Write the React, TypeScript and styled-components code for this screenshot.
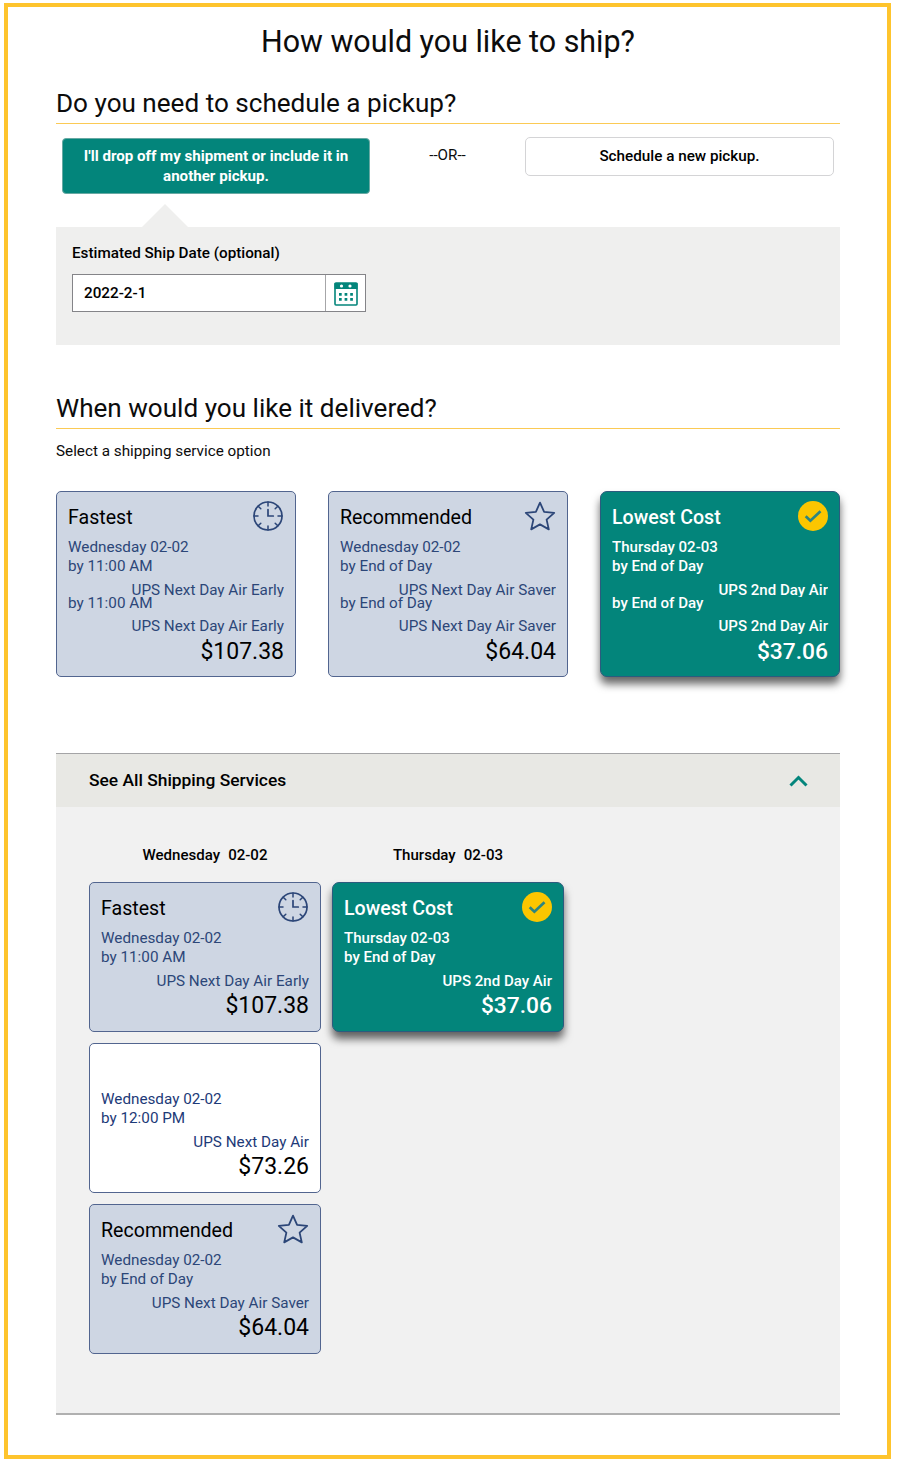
import React from "react";
import styled, { createGlobalStyle, css } from "styled-components";

const teal = "#03857b";
const gold = "#fec42d";
const navy = "#2c4678";

const GlobalStyle = createGlobalStyle`
  * { box-sizing: border-box; }
  body {
    margin: 0;
    background: #fff;
    color: #0c0c0c;
    font-family: Roboto, "Liberation Sans", sans-serif;
    font-size: 15.25px;
    line-height: 19.5px;
  }
  h1, h2, h3 { margin: 0; font-weight: 400; }
  p { margin: 0; }
  button { font: inherit; color: inherit; }
`;

const Frame = styled.main`
  width: 887px;
  height: 1456px;
  margin: 3px 0 10px 4px;
  border: 4px solid ${gold};
  padding: 15px 47px 0 48px;
`;

const PageTitle = styled.h1`
  font-size: 30.45px;
  line-height: 40px;
  text-align: center;
`;

const SectionTitle = styled.h2`
  font-size: 26.1px;
  line-height: 40px;
  height: 41px;
  border-bottom: 1px solid #fbca55;
`;

const PickupSection = styled.section`
  margin-top: 21px;
`;

const PickupChoices = styled.div`
  display: flex;
  align-items: flex-start;
  justify-content: space-between;
  padding: 13px 6px 0 6px;
  height: 80px;
`;

const ChoiceButton = styled.button<{ $selected?: boolean }>`
  width: 309px;
  padding: 9px 14px 8px;
  border: 1px solid #d4d4d6;
  border-radius: 5px;
  background: #fff;
  color: #000;
  font-weight: 500;
  line-height: 19.5px;
  ${(p) =>
    p.$selected &&
    css`
      width: 308px;
      margin-top: 1px;
      padding: 8px 14px 7px;
      border-color: #68a9a3;
      border-radius: 4px;
      background: ${teal};
      color: #fff;
      font-weight: 700;
      font-size: 15.12px;
    `}
`;

const OrLabel = styled.span`
  padding-top: 9px;
  font-size: 15.2px;
`;

const Pointer = styled.svg`
  display: block;
  margin: 0 0 0 86px;
  width: 46px;
  height: 23px;
`;

const DatePanel = styled.div`
  height: 118px;
  padding: 17px 16px 16px;
  background: #efefee;
`;

const DateLabel = styled.label`
  display: block;
  font-weight: 500;
  color: #000;
`;

const DateField = styled.div`
  display: flex;
  width: 294px;
  height: 38px;
  margin-top: 10px;
  border: 1px solid #848488;
  background: #fff;
`;

const DateValue = styled.div`
  flex: 1;
  padding: 9px 11px 0;
  font-weight: 500;
  color: #000;
`;

const CalendarButton = styled.button`
  display: flex;
  align-items: center;
  justify-content: center;
  width: 40px;
  padding: 2px 0 0;
  border: 0;
  border-left: 1px solid #a6a6a8;
  background: #fff;
`;

const DeliverySection = styled.section`
  margin-top: 43px;
`;

const Hint = styled.p`
  margin-top: 13px;
`;

const FeaturedCards = styled.div`
  display: grid;
  grid-template-columns: repeat(3, 240px);
  justify-content: space-between;
  margin-top: 29px;
`;

type Tone = "shaded" | "plain" | "selected";

const Card = styled.article<{ $tone: Tone; $tall?: boolean }>`
  height: ${(p) => (p.$tall ? 186 : 150)}px;
  padding: 0 11px;
  border: 1px solid #52658f;
  border-radius: 5px;
  background: ${(p) => ({ shaded: "#ced6e3", plain: "#fff", selected: teal })[p.$tone]};
  color: ${(p) => (p.$tone === "selected" ? "#fff" : p.$tone === "plain" ? "#1d3a78" : navy)};
  ${(p) =>
    p.$tone === "selected" &&
    css`
      border-color: #2c5b7e;
      border-radius: 7px;
      box-shadow: 0 7px 9px rgba(0, 0, 0, 0.6);
      font-weight: 500;
      font-size: 15.05px;
    `}
`;

const CardHeader = styled.header<{ $selected: boolean }>`
  display: flex;
  justify-content: space-between;
  height: 46px;
  color: ${(p) => (p.$selected ? "#fff" : "#000")};
`;

const CardTitle = styled.h3<{ $selected: boolean }>`
  padding-top: 12px;
  font-size: 19.6px;
  line-height: 27px;
  font-weight: ${(p) => (p.$selected ? 500 : 400)};
`;

const CardIcon = styled.svg<{ $flush?: boolean }>`
  flex: none;
  width: 32px;
  height: 32px;
  margin: 8px ${(p) => (p.$flush ? -1 : 0)}px 0 0;
`;

const Arrival = styled.p``;

const ServiceName = styled.p`
  margin-top: 4px;
  text-align: right;
`;

const ClippedDetails = styled.div`
  height: 59px;
  overflow: hidden;
`;

const RepeatedDetails = styled.div`
  margin-top: -3px;
`;

const Price = styled.p<{ $selected: boolean }>`
  margin-top: 1px;
  font-size: ${(p) => (p.$selected ? 22.8 : 23)}px;
  line-height: 27px;
  text-align: right;
  color: ${(p) => (p.$selected ? "#fff" : "#000")};
`;

const ServicesSection = styled.section`
  height: 662px;
  margin-top: 76px;
  border-top: 1.5px solid #a4a4a6;
  border-bottom: 2px solid #b0b0b0;
  background: #f1f1f1;
`;

const ServicesHeader = styled.header`
  display: flex;
  align-items: center;
  justify-content: space-between;
  height: 53px;
  padding: 1px 32px 0 33px;
  background: #e8e8e4;
  color: #000;
  font-size: 17.4px;
  font-weight: 500;
`;

const Chevron = styled.svg`
  width: 19px;
  height: 12px;
`;

const DayColumns = styled.div`
  display: grid;
  grid-template-columns: 232px 232px;
  align-items: start;
  gap: 11px;
  padding: 39px 33px 0;
`;

const DayColumn = styled.div`
  display: grid;
  row-gap: 11px;
`;

const DayHeading = styled.h3`
  display: flex;
  justify-content: center;
  gap: 8px;
  height: 25px;
  font-size: 15.05px;
  font-weight: 500;
  color: #000;
`;

const ClockIcon = () => (
  <CardIcon viewBox="0 0 32 32" fill="none" stroke={navy} strokeWidth="1.7" strokeLinecap="round">
    <circle cx="16" cy="16" r="14" />
    <path d="M16 2v4M16 26v4M2 16h4M26 16h4M6.2 6.2l2.6 2.6M23.2 23.2l2.6 2.6M25.8 6.2l-2.6 2.6M8.8 23.2l-2.6 2.6" strokeWidth="1.5" />
    <path d="M16 9.5V16h5.3" strokeWidth="1.7" />
  </CardIcon>
);

const StarIcon = () => (
  <CardIcon viewBox="0 0 32 32" fill="none" stroke={navy} strokeWidth="1.8" strokeLinejoin="round">
    <path d="M16 2.6l4.1 9.2 10.1 1-7.6 6.8 2.2 9.8L16 24.4l-8.8 5 2.2-9.8-7.6-6.8 10.1-1z" />
  </CardIcon>
);

const CheckIcon = () => (
  <CardIcon $flush viewBox="0 0 32 32" fill="none">
    <circle cx="16" cy="16" r="15" fill="#fbc600" />
    <path d="M8.7 16.2l4.7 4.5L23.5 11.3" stroke="#2d8580" strokeWidth="2.7" />
  </CardIcon>
);

const CalendarIcon = () => (
  <svg width="24" height="24" viewBox="0 0 24 24">
    <rect x="1" y="1" width="22" height="22" rx="1" fill="#fff" stroke={teal} strokeWidth="1.6" />
    <path d="M.5 1h23v6H.5z" fill={teal} />
    <circle cx="7.5" cy="4" r="1.6" fill="#fff" />
    <circle cx="16" cy="4" r="1.6" fill="#fff" />
    <path
      d="M5 11h2.7v2.7H5zM10.6 11h2.7v2.7h-2.7zM16.2 11h2.7v2.7h-2.7zM5 16h2.7v2.7H5zM10.6 16h2.7v2.7h-2.7zM16.2 16h2.7v2.7h-2.7z"
      fill={teal}
    />
  </svg>
);

interface Service {
  title?: string;
  day: string;
  time: string;
  name: string;
  price: string;
  tone: Tone;
  icon?: React.ReactNode;
}

const fastest: Service = {
  title: "Fastest",
  day: "Wednesday 02-02",
  time: "by 11:00 AM",
  name: "UPS Next Day Air Early",
  price: "$107.38",
  tone: "shaded",
  icon: <ClockIcon />,
};

const recommended: Service = {
  title: "Recommended",
  day: "Wednesday 02-02",
  time: "by End of Day",
  name: "UPS Next Day Air Saver",
  price: "$64.04",
  tone: "shaded",
  icon: <StarIcon />,
};

const nextDayAir: Service = {
  day: "Wednesday 02-02",
  time: "by 12:00 PM",
  name: "UPS Next Day Air",
  price: "$73.26",
  tone: "plain",
};

const lowestCost: Service = {
  title: "Lowest Cost",
  day: "Thursday 02-03",
  time: "by End of Day",
  name: "UPS 2nd Day Air",
  price: "$37.06",
  tone: "selected",
  icon: <CheckIcon />,
};

const ServiceCard = ({ service, tall }: { service: Service; tall?: boolean }) => {
  const selected = service.tone === "selected";
  const details = (
    <>
      <Arrival>{service.time}</Arrival>
      <ServiceName>{service.name}</ServiceName>
    </>
  );
  return (
    <Card $tone={service.tone} $tall={tall}>
      <CardHeader $selected={selected}>
        <CardTitle $selected={selected}>{service.title}</CardTitle>
        {service.icon}
      </CardHeader>
      {tall ? (
        <>
          <ClippedDetails>
            <Arrival>{service.day}</Arrival>
            {details}
          </ClippedDetails>
          <RepeatedDetails>{details}</RepeatedDetails>
        </>
      ) : (
        <>
          <Arrival>{service.day}</Arrival>
          {details}
        </>
      )}
      <Price $selected={selected}>{service.price}</Price>
    </Card>
  );
};

const days = [
  { day: "Wednesday", date: "02-02", services: [fastest, nextDayAir, recommended] },
  { day: "Thursday", date: "02-03", services: [lowestCost] },
];

export default function App() {
  return (
    <>
      <GlobalStyle />
      <Frame>
        <PageTitle>How would you like to ship?</PageTitle>

        <PickupSection>
          <SectionTitle>Do you need to schedule a pickup?</SectionTitle>
          <PickupChoices>
            <ChoiceButton $selected>I'll drop off my shipment or include it in another pickup.</ChoiceButton>
            <OrLabel>--OR--</OrLabel>
            <ChoiceButton>Schedule a new pickup.</ChoiceButton>
          </PickupChoices>
          <Pointer viewBox="0 0 46 23">
            <path d="M0 23L23 0l23 23z" fill="#efefee" />
          </Pointer>
          <DatePanel>
            <DateLabel>Estimated Ship Date (optional)</DateLabel>
            <DateField>
              <DateValue>2022-2-1</DateValue>
              <CalendarButton aria-label="Open calendar">
                <CalendarIcon />
              </CalendarButton>
            </DateField>
          </DatePanel>
        </PickupSection>

        <DeliverySection>
          <SectionTitle>When would you like it delivered?</SectionTitle>
          <Hint>Select a shipping service option</Hint>
          <FeaturedCards>
            <ServiceCard service={fastest} tall />
            <ServiceCard service={recommended} tall />
            <ServiceCard service={lowestCost} tall />
          </FeaturedCards>
        </DeliverySection>

        <ServicesSection>
          <ServicesHeader>
            See All Shipping Services
            <Chevron viewBox="0 0 19 12" fill="none" stroke={teal} strokeWidth="3">
              <path d="M1.5 10.5l8-8 8 8" />
            </Chevron>
          </ServicesHeader>
          <DayColumns>
            {days.map(({ day, date, services }) => (
              <DayColumn key={day}>
                <DayHeading>
                  <span>{day}</span>
                  <span>{date}</span>
                </DayHeading>
                {services.map((service) => (
                  <ServiceCard key={service.name} service={service} />
                ))}
              </DayColumn>
            ))}
          </DayColumns>
        </ServicesSection>
      </Frame>
    </>
  );
}
